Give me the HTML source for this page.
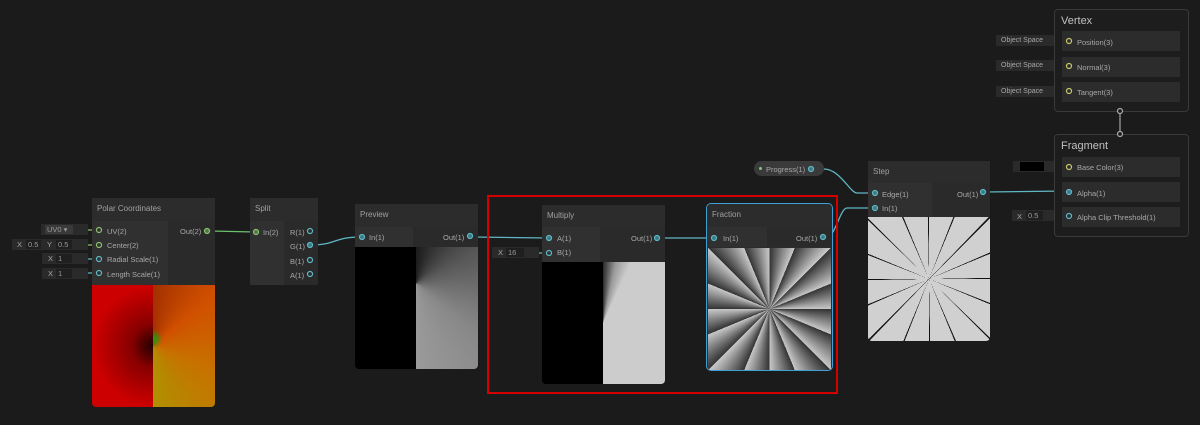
<!DOCTYPE html>
<html><head><style>
*{margin:0;padding:0;box-sizing:border-box}
body{width:1200px;height:425px;background:#1b1b1b;position:relative;overflow:hidden;font-family:"Liberation Sans",sans-serif;font-size:7.5px;color:#a8a8a8}
.a{position:absolute}
.hd{background:#2c2c2c;color:#a0a0a0;font-size:8px;padding-left:5px}
.pl{background:#303030}
.pr{background:#2a2a2a}
.t{position:absolute;white-space:nowrap}
.fld{position:absolute;background:#2a2a2a;height:11px}
.fi{position:absolute;background:#1f1f1f;height:9px;top:1px;color:#999;padding-left:2px;line-height:9px}
.blk{position:absolute;border:1px solid #3a3a3a;border-radius:4px;background:#1d1d1d}
</style></head><body>

<svg class="a" style="left:0;top:0" width="1200" height="425">
 <g fill="none" stroke-width="1.3">
  <path d="M210 231 L256 232" stroke="#6ec06e"/>
  <path d="M312 245 C335 245,335 237,360 237" stroke="#5fb8c4"/>
  <path d="M473 237 L548 238" stroke="#5fb8c4"/>
  <path d="M660 238 L713 238" stroke="#5fb8c4"/>
  <path d="M826 238 C835 238,840 208,847 208 L873 208" stroke="#5fb8c4"/>
  <path d="M824 169 C840 169,850 193,857 193 L873 193" stroke="#5fb8c4"/>
  <path d="M985 192 L1068 191" stroke="#5fb8c4"/>
  <path d="M88 230 L97 230 M88 245 L97 245" stroke="#8fc06e"/>
  <path d="M88 259 L97 259 M88 273 L97 273 M525 253 L542 253 M1052 216 L1068 216" stroke="#5fb8c4"/>
  <path d="M1053 41 L1068 41 M1053 66 L1068 66 M1053 91 L1068 91 M1053 167 L1068 167" stroke="#c8c86e"/>
 </g>
</svg>

<!-- Polar Coordinates -->
<div class="a hd" style="left:92px;top:198px;width:123px;height:23px;line-height:21px">Polar Coordinates</div>
<div class="a pl" style="left:92px;top:221px;width:76px;height:64px"></div>
<div class="a pr" style="left:168px;top:221px;width:47px;height:64px"></div>
<div class="t" style="left:107px;top:227px">UV(2)</div>
<div class="t" style="left:107px;top:241px">Center(2)</div>
<div class="t" style="left:107px;top:255px">Radial Scale(1)</div>
<div class="t" style="left:107px;top:270px">Length Scale(1)</div>
<div class="t" style="left:180px;top:227px">Out(2)</div>
<div class="a" style="left:92px;top:285px;width:123px;height:122px;border-radius:0 0 4px 4px;overflow:hidden;display:flex">
 <div style="width:61px;height:100%;background:radial-gradient(circle at 100% 50%,#200 0,#800 22px,#c00 60px)"></div>
 <div style="width:62px;height:100%;background:conic-gradient(from 0deg at 0 50%,#a33000 0,#d05000 50deg,#c87000 110deg,#b09000 180deg);position:relative"><div style="position:absolute;left:0;top:40px;width:20px;height:40px;background:radial-gradient(circle at 0 35%,#1a1 0,rgba(0,150,0,0) 10px)"></div></div>
</div>
<!-- polar fields -->
<div class="fld" style="left:41px;top:224px;width:47px"></div><div class="fi" style="left:45px;top:225px;width:28px;background:#3a3a3a">UV0 ▾</div>
<div class="fld" style="left:12px;top:239px;width:76px"></div><div class="t" style="left:17px;top:240px">X</div><div class="fi" style="left:26px;top:240px;width:15px">0.5</div><div class="t" style="left:47px;top:240px">Y</div><div class="fi" style="left:56px;top:240px;width:16px">0.5</div>
<div class="fld" style="left:42px;top:253px;width:46px"></div><div class="t" style="left:48px;top:254px">X</div><div class="fi" style="left:56px;top:254px;width:16px">1</div>
<div class="fld" style="left:42px;top:268px;width:46px"></div><div class="t" style="left:48px;top:269px">X</div><div class="fi" style="left:56px;top:269px;width:16px">1</div>

<!-- Split -->
<div class="a hd" style="left:250px;top:198px;width:68px;height:23px;line-height:22px">Split</div>
<div class="a pl" style="left:250px;top:221px;width:34px;height:64px"></div>
<div class="a pr" style="left:284px;top:221px;width:34px;height:64px"></div>
<div class="t" style="left:263px;top:228px">In(2)</div>
<div class="t" style="left:290px;top:228px">R(1)</div>
<div class="t" style="left:290px;top:242px">G(1)</div>
<div class="t" style="left:290px;top:257px">B(1)</div>
<div class="t" style="left:290px;top:271px">A(1)</div>

<!-- Preview -->
<div class="a hd" style="left:355px;top:204px;width:123px;height:23px;line-height:21px">Preview</div>
<div class="a pl" style="left:355px;top:227px;width:58px;height:20px"></div>
<div class="a pr" style="left:413px;top:227px;width:65px;height:20px"></div>
<div class="t" style="left:369px;top:233px">In(1)</div>
<div class="t" style="left:443px;top:233px">Out(1)</div>
<div class="a" style="left:355px;top:247px;width:123px;height:122px;border-radius:0 0 4px 4px;overflow:hidden;display:flex">
 <div style="width:61px;background:#000"></div>
 <div style="width:62px;background:conic-gradient(from 0deg at 0 30%,#1a1a1a 0,#555 60deg,#888 130deg,#9a9a9a 180deg)"></div>
</div>

<!-- red box -->
<div class="a" style="left:487px;top:195px;width:351px;height:199px;border:2px solid #d40000"></div>

<!-- Multiply -->
<div class="a hd" style="left:542px;top:205px;width:123px;height:22px;line-height:21px">Multiply</div>
<div class="a pl" style="left:542px;top:227px;width:58px;height:35px"></div>
<div class="a pr" style="left:600px;top:227px;width:65px;height:35px"></div>
<div class="t" style="left:557px;top:234px">A(1)</div>
<div class="t" style="left:557px;top:248px">B(1)</div>
<div class="t" style="left:631px;top:234px">Out(1)</div>
<div class="fld" style="left:492px;top:247px;width:47px"></div><div class="t" style="left:498px;top:248px">X</div><div class="fi" style="left:506px;top:248px;width:18px">16</div>
<div class="a" style="left:542px;top:262px;width:123px;height:122px;border-radius:0 0 4px 4px;overflow:hidden;display:flex">
 <div style="width:61px;background:#000"></div>
 <div style="width:62px;background:conic-gradient(from 0deg at 0 50%,#2a2a2a 0,#999 12deg,#ccc 25deg,#ccc 180deg)"></div>
</div>

<!-- Fraction -->
<div class="a" style="left:706px;top:203px;width:127px;height:168px;border:1px solid #3fa0d8;border-radius:5px;overflow:hidden;background:#2c2c2c">
 <div class="hd" style="height:23px;line-height:22px">Fraction</div>
 <div class="pl a" style="left:0;top:23px;width:60px;height:20px"></div>
 <div class="pr a" style="left:60px;top:23px;width:65px;height:20px"></div>
 <div class="t" style="left:16px;top:30px">In(1)</div>
 <div class="t" style="left:89px;top:30px">Out(1)</div>
 <div class="a" style="left:1px;top:44px;width:123px;height:122px;background:repeating-conic-gradient(from 0deg at 50% 50%,#333 0,#c8c8c8 22.5deg)"></div>
</div>

<!-- Progress -->
<div class="a" style="left:754px;top:161px;width:70px;height:15px;border-radius:8px;background:#3a3a3a"></div>
<div class="t" style="left:766px;top:165px">Progress(1)</div>
<div class="a" style="left:759px;top:167px;width:3px;height:3px;border-radius:50%;background:#7c7"></div>

<!-- Step -->
<div class="a hd" style="left:868px;top:161px;width:122px;height:22px;line-height:21px">Step</div>
<div class="a pl" style="left:868px;top:183px;width:64px;height:34px"></div>
<div class="a pr" style="left:932px;top:183px;width:58px;height:34px"></div>
<div class="t" style="left:882px;top:190px">Edge(1)</div>
<div class="t" style="left:882px;top:204px">In(1)</div>
<div class="t" style="left:957px;top:190px">Out(1)</div>
<div class="a" style="left:868px;top:217px;width:122px;height:124px;border-radius:0 0 4px 4px;background:repeating-conic-gradient(from 0deg at 50% 50%,#d0d0d0 0,#d0d0d0 21.3deg,#111 21.6deg,#111 22.5deg)"></div>

<!-- Vertex -->
<div class="blk" style="left:1054px;top:9px;width:135px;height:103px"></div>
<div class="t" style="left:1061px;top:15px;font-size:11px;color:#c0c0c0">Vertex</div>
<div class="a" style="left:1062px;top:31px;width:118px;height:20px;background:#2c2c2c"></div>
<div class="a" style="left:1062px;top:57px;width:118px;height:20px;background:#2c2c2c"></div>
<div class="a" style="left:1062px;top:82px;width:118px;height:20px;background:#2c2c2c"></div>
<div class="t" style="left:1077px;top:38px">Position(3)</div>
<div class="t" style="left:1077px;top:63px">Normal(3)</div>
<div class="t" style="left:1077px;top:88px">Tangent(3)</div>
<div class="fld" style="left:996px;top:35px;width:58px"></div><div class="t" style="left:1001px;top:37px;font-size:7px">Object Space</div>
<div class="fld" style="left:996px;top:60px;width:58px"></div><div class="t" style="left:1001px;top:62px;font-size:7px">Object Space</div>
<div class="fld" style="left:996px;top:86px;width:58px"></div><div class="t" style="left:1001px;top:88px;font-size:7px">Object Space</div>

<!-- Fragment -->
<div class="blk" style="left:1054px;top:134px;width:135px;height:103px"></div>
<div class="t" style="left:1061px;top:140px;font-size:11px;color:#c0c0c0">Fragment</div>
<div class="a" style="left:1062px;top:157px;width:118px;height:20px;background:#2c2c2c"></div>
<div class="a" style="left:1062px;top:182px;width:118px;height:20px;background:#2c2c2c"></div>
<div class="a" style="left:1062px;top:207px;width:118px;height:20px;background:#2c2c2c"></div>
<div class="t" style="left:1077px;top:163px">Base Color(3)</div>
<div class="t" style="left:1077px;top:189px">Alpha(1)</div>
<div class="t" style="left:1077px;top:213px">Alpha Clip Threshold(1)</div>
<div class="fld" style="left:1013px;top:161px;width:41px"></div><div class="a" style="left:1020px;top:162px;width:24px;height:9px;background:#000"></div>
<div class="fld" style="left:1012px;top:210px;width:42px"></div><div class="t" style="left:1017px;top:212px">X</div><div class="fi" style="left:1026px;top:211px;width:17px">0.5</div>

<!-- port circles & connectors -->
<svg class="a" style="left:0;top:0" width="1200" height="425">
 <path d="M1120 111 L1120 134" stroke="#9a9a9a" stroke-width="1.3" fill="none"/>
 <g fill="#1b1b1b" stroke-width="1.2">
  <circle cx="1120" cy="111" r="2.5" stroke="#aaa"/>
  <circle cx="1120" cy="134" r="2.5" stroke="#aaa"/>
 </g>
 <g fill="none" stroke-width="1.2">
  <g stroke="#8fc06e"><circle cx="99" cy="230" r="2.5"/><circle cx="99" cy="245" r="2.5"/></g>
  <g stroke="#5fb8c4"><circle cx="99" cy="259" r="2.5"/><circle cx="99" cy="273" r="2.5"/><circle cx="310" cy="231" r="2.5"/><circle cx="310" cy="260" r="2.5"/><circle cx="310" cy="274" r="2.5"/><circle cx="549" cy="253" r="2.5"/><circle cx="1069" cy="216" r="2.5"/></g>
  <g stroke="#c8c86e"><circle cx="1069" cy="41" r="2.5"/><circle cx="1069" cy="66" r="2.5"/><circle cx="1069" cy="91" r="2.5"/><circle cx="1069" cy="167" r="2.5"/></g>
 </g>
 <g stroke-width="1.2">
  <g stroke="#8fc06e" fill="#4a7a4a"><circle cx="207" cy="231" r="2.5"/><circle cx="256" cy="232" r="2.5"/></g>
  <g stroke="#5fb8c4" fill="#3a7a84"><circle cx="310" cy="245" r="2.5"/><circle cx="362" cy="237" r="2.5"/><circle cx="470" cy="236" r="2.5"/><circle cx="549" cy="238" r="2.5"/><circle cx="657" cy="238" r="2.5"/><circle cx="714" cy="238" r="2.5"/><circle cx="823" cy="237" r="2.5"/><circle cx="811" cy="169" r="2.5"/><circle cx="875" cy="193" r="2.5"/><circle cx="875" cy="208" r="2.5"/><circle cx="983" cy="192" r="2.5"/><circle cx="1069" cy="192" r="2.5"/></g>
 </g>
</svg>
</body></html>
